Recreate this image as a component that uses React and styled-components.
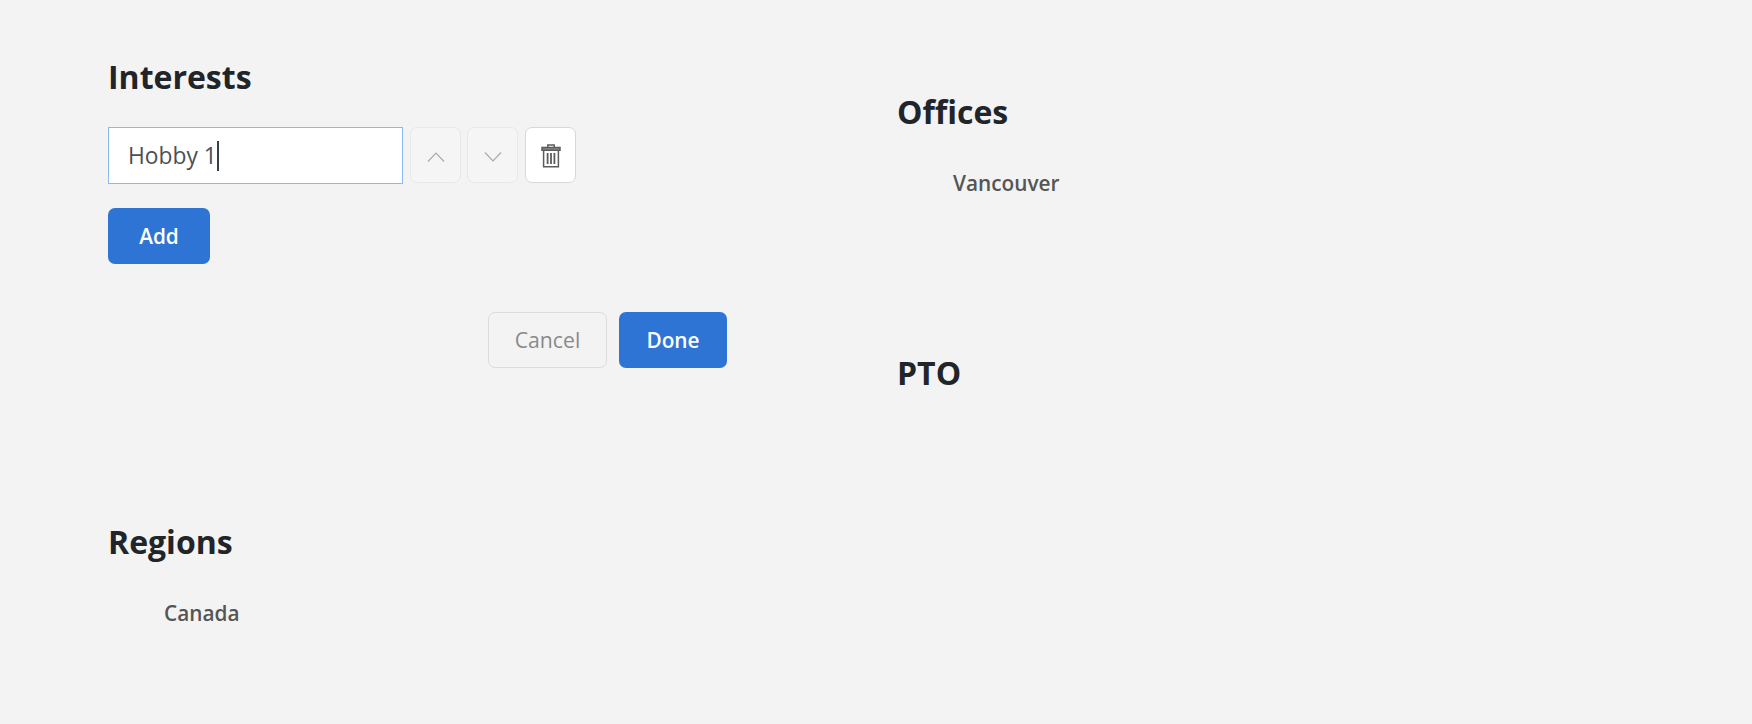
import { createGlobalStyle } from "styled-components";
import styled from "styled-components";

const GlobalStyle = createGlobalStyle`
  html, body {
    margin: 0;
    height: 100%;
    background: #f3f3f3;
    font-family: "Open Sans", "Noto Sans", sans-serif;
  }
`;

const Page = styled.div`
  display: flex;
  height: 724px;
  overflow: hidden;
  background: #f3f3f3;
`;

const LeftColumn = styled.div`
  width: 619px;
  margin-left: 108px;
  padding-top: 55px;
`;

const RightColumn = styled.div`
  margin-left: 170px;
  padding-top: 90px;
`;

const Heading = styled.h2`
  margin: 0;
  font-size: 32px;
  line-height: 44px;
  font-weight: 700;
  color: #212529;
`;

const ItemRow = styled.div`
  display: flex;
  gap: 6px;
  margin-top: 28px;
`;

const TextBox = styled.div`
  box-sizing: border-box;
  width: 295px;
  height: 57px;
  padding: 0 0 1px 19px;
  margin-right: 1px;
  display: flex;
  align-items: center;
  background: #fff;
  border: 1px solid #8ab8f0;
  font-size: 22.8px;
  color: #495057;
`;

const Caret = styled.span`
  width: 2px;
  height: 30px;
  margin-top: 1px;
  background: #3a3f45;
`;

const IconButton = styled.button`
  box-sizing: border-box;
  width: 51px;
  height: 56px;
  padding: 2px 0 0;
  display: flex;
  align-items: center;
  justify-content: center;
  border-radius: 7px;
  border: 1.5px solid ${(p) => (p.disabled ? "#e8e8e8" : "#d8d8d8")};
  background: ${(p) => (p.disabled ? "#f5f5f5" : "#fff")};
`;

const TrashButton = styled(IconButton)`
  margin-left: 1px;
`;

const Button = styled.button`
  box-sizing: border-box;
  height: 56px;
  padding: 0 0 1px;
  width: ${(p) => p.$width}px;
  border-radius: 7px;
  font-family: inherit;
  font-size: 20.8px;
  font-weight: 600;
  color: #fff;
  background: #2d74d4;
  border: none;
`;

const AddButton = styled(Button)`
  display: block;
  margin-top: 24px;
`;

const CancelButton = styled(Button)`
  background: transparent;
  border: 1.5px solid #dcdcdc;
  color: #8a8a8a;
  font-size: 21.2px;
  font-weight: 400;
`;

const Actions = styled.div`
  display: flex;
  justify-content: flex-end;
  gap: 12px;
  margin-top: 48px;
`;

const Section = styled.section`
  margin-top: ${(p) => p.$top || 0}px;
`;

const Item = styled.div`
  margin: 34px 0 0 56px;
  font-size: 20.8px;
  line-height: 30px;
  font-weight: 600;
  color: #555;
`;

const ChevronSvg = styled.svg`
  margin-top: 2px;
`;

const Chevron = ({ up }) => (
  <ChevronSvg width="18" height="10" viewBox="0 0 18 10" fill="none" stroke="#a8a8a8" strokeWidth="1.1">
    <path d={up ? "M1 9.5 9 1l8 8.5" : "M1 .5 9 9l8-8.5"} />
  </ChevronSvg>
);

const TrashIcon = () => (
  <svg width="20" height="24" viewBox="0 0 20 24" fill="none" stroke="#5c5c5c" strokeWidth="1.5">
    <path d="M6.8 3.5V1h6.4v2.5" />
    <path d="M1 3.6h18v2.6H1z" fill="#8a8a8a" />
    <path d="M2.6 6.2v16.6h14.8V6.2" />
    <path d="M6.6 9v11M10 9v11M13.4 9v11" strokeWidth="1.8" />
  </svg>
);

export default function App() {
  return (
    <Page>
      <GlobalStyle />
      <LeftColumn>
        <Section>
          <Heading>Interests</Heading>
          <ItemRow>
            <TextBox>
              Hobby 1<Caret />
            </TextBox>
            <IconButton disabled>
              <Chevron up />
            </IconButton>
            <IconButton disabled>
              <Chevron />
            </IconButton>
            <TrashButton>
              <TrashIcon />
            </TrashButton>
          </ItemRow>
          <AddButton $width={102}>Add</AddButton>
          <Actions>
            <CancelButton $width={119}>Cancel</CancelButton>
            <Button $width={108}>Done</Button>
          </Actions>
        </Section>
        <Section $top={152}>
          <Heading>Regions</Heading>
          <Item>Canada</Item>
        </Section>
      </LeftColumn>
      <RightColumn>
        <Section>
          <Heading>Offices</Heading>
          <Item>Vancouver</Item>
        </Section>
        <Section $top={153}>
          <Heading>PTO</Heading>
        </Section>
      </RightColumn>
    </Page>
  );
}
